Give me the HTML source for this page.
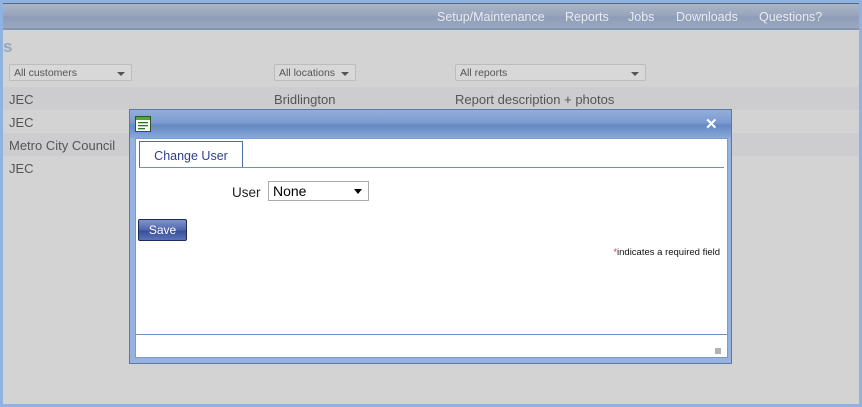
<!DOCTYPE html>
<html><head><meta charset="utf-8"><style>
*{margin:0;padding:0;box-sizing:border-box}
body{width:862px;height:407px;overflow:hidden;background:#8fb2e0;font-family:"Liberation Sans",sans-serif;position:relative}
.page{position:absolute;left:3px;top:3px;width:856px;height:401px;background:#d3d3d3;overflow:hidden}
.nav{position:absolute;left:0;top:0;width:856px;height:27px;border-top:1px solid #5a6a80;background:linear-gradient(#a9b4c6,#9aa6bd 45%,#8e9cb6 55%,#9aa8c2);border-bottom:2px solid #8395b4}
.nav span{position:absolute;top:6px;font-size:12.5px;color:#e6ebf3}
.s{position:absolute;left:0;top:34px;font-size:17px;font-weight:bold;color:#94a6c0}
.sel{position:absolute;top:61px;height:17px;border:1px solid #bcbcbc;background:#d8d8d8;font-size:10.5px;color:#555;padding:2px 4px;border-radius:2px}
.sel:after{content:"";position:absolute;right:6px;top:7px;border:4px solid transparent;border-top:4px solid #555;border-bottom:0}
.row{position:absolute;left:0;width:856px;height:23px;font-size:13px;color:#555}
.row span{position:absolute;top:5px}
.dlg{position:absolute;left:129px;top:109px;width:603px;height:255px;background:#95b3de;border:1px solid #5b78a6}
.title{position:absolute;left:0;top:0;width:601px;height:28px;background:linear-gradient(#93aedb,#7b9bd0 45%,#6589c4 55%,#8aa8d8)}
.inner{position:absolute;left:5px;top:28px;width:593px;height:220px;background:#fff;border:1px solid #7b9bcf}
.tab{position:absolute;left:3px;top:2px;width:104px;height:27px;border:1px solid #4e6da6;border-bottom:none;font-size:12.5px;color:#2b3f8f;text-align:center;line-height:28px}
.tl{position:absolute;left:3px;top:28px;width:585px;height:1px;background:#6d8fc6}
.btn{position:absolute;left:2px;top:80px;width:49px;height:22px;border:1px solid #1c2b57;border-radius:2px;background:linear-gradient(#8193c8,#4f66ae 50%,#36509a 55%,#5c73b8);color:#fff;font-size:12px;text-align:center;line-height:20px}
</style></head><body>
<div class="page">
 <div class="nav">
  <span style="left:434px">Setup/Maintenance</span>
  <span style="left:562px">Reports</span>
  <span style="left:625px">Jobs</span>
  <span style="left:673px">Downloads</span>
  <span style="left:756px">Questions?</span>
 </div>
 <div class="s">s</div>
 <div class="sel" style="left:6px;width:123px">All customers</div>
 <div class="sel" style="left:271px;width:82px">All locations</div>
 <div class="sel" style="left:452px;width:191px">All reports</div>
 <div class="row" style="top:84px;background:#cdcdd0"><span style="left:6px">JEC</span><span style="left:271px">Bridlington</span><span style="left:452px">Report description + photos</span></div>
 <div class="row" style="top:107px"><span style="left:6px">JEC</span></div>
 <div class="row" style="top:130px;background:#cdcdd0"><span style="left:6px">Metro City Council</span></div>
 <div class="row" style="top:153px"><span style="left:6px">JEC</span></div>
</div>
<div class="dlg">
 <div class="title">
  <svg style="position:absolute;left:5px;top:6px" width="16" height="16" viewBox="0 0 16 16"><rect x="0.5" y="0.5" width="15" height="15" fill="#fff" stroke="#2d5a1e"/><rect x="1" y="1" width="14" height="3" fill="#4ea832"/><rect x="3" y="6" width="10" height="1.3" fill="#2d7a1e"/><rect x="3" y="9" width="10" height="1.3" fill="#2d7a1e"/><rect x="3" y="12" width="7" height="1.3" fill="#2d7a1e"/></svg>
  <div style="position:absolute;left:575px;top:5px;color:#fff;font-size:15px;font-weight:bold">✕</div>
 </div>
 <div class="inner">
  <div class="tab">Change User</div>
  <div class="tl"></div>
  <div style="position:absolute;left:96px;top:46px;font-size:13.5px;color:#222">User</div>
  <div style="position:absolute;left:132px;top:42px;width:101px;height:20px;border:1px solid #aaa;font-size:14px;color:#000;padding:1px 4px">None<span style="position:absolute;right:6px;top:7px;border:4px solid transparent;border-top:5px solid #000;border-bottom:0"></span></div>
  <div class="btn">Save</div>
  <div style="position:absolute;right:7px;top:108px;font-size:9.5px;color:#111"><span style="color:#e33">*</span>indicates a required field</div>
  <div style="position:absolute;left:0;top:195px;width:591px;height:1px;background:#6d8fc6"></div>
  <div style="position:absolute;right:6px;bottom:3px;width:6px;height:6px;background:radial-gradient(circle,#999 0.8px,transparent 1px) 0 0/2px 2px"></div>
 </div>
</div>
</body></html>
